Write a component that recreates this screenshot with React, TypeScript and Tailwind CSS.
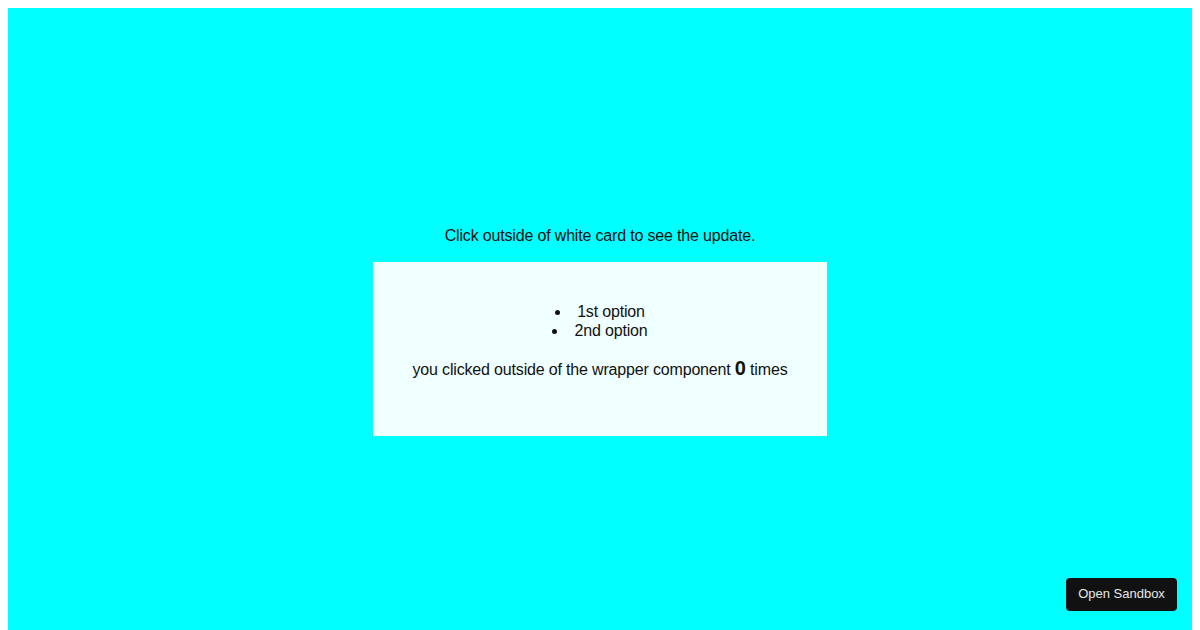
export default function App() {
  return (
    <div className="h-screen overflow-hidden bg-white px-2 pt-2 font-['Liberation_Sans',Arial,sans-serif] text-[16px] leading-[1.15] tracking-[-0.17px] text-[#111]">
      <div className="flex h-[630px] flex-col items-center justify-center bg-[#00ffff]">
        <p className="mt-4 mb-[17px]">Click outside of white card to see the update.</p>
        <div className="mb-[-1px] flex h-[174px] w-[454px] flex-col items-center bg-[#f0ffff] pt-[41px] text-center">
          <ul className="list-inside list-disc">
            <li>1st option</li>
            <li>2nd option</li>
          </ul>
          <p className="mt-[17px]">
            you clicked outside of the wrapper component <span className="text-[20px] font-bold">0</span> times
          </p>
        </div>
      </div>
      <button className="absolute bottom-[19px] right-[23px] flex h-[33px] w-[111px] items-center justify-center rounded-[4px] bg-[#111] text-[13px] tracking-normal text-white/90">
        Open Sandbox
      </button>
    </div>
  );
}
